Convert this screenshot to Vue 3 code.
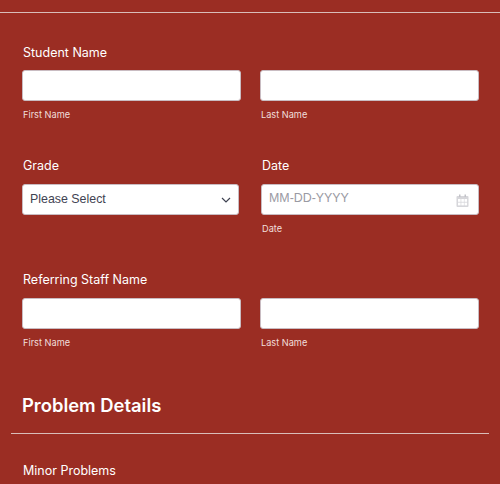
<script setup>
const rows = [
  { label: 'Student Name', subs: ['First Name', 'Last Name'] },
  { label: 'Referring Staff Name', subs: ['First Name', 'Last Name'] }
]
</script>

<template>
  <div class="page">
    <hr class="rule top-rule" />

    <section class="row-block first">
      <div class="label">{{ rows[0].label }}</div>
      <div class="pair">
        <div v-for="sub in rows[0].subs" :key="sub" class="field">
          <div class="input"></div>
          <div class="sub">{{ sub }}</div>
        </div>
      </div>
    </section>

    <section class="grade-date">
      <div class="col">
        <div class="label wide">Grade</div>
        <div class="input select">
          <span>Please Select</span>
          <svg class="chevron" width="10" height="6" viewBox="0 0 10 6">
            <path d="M1 1l4 4 4-4" fill="none" stroke="#3f4352" stroke-width="1.2" />
          </svg>
        </div>
      </div>
      <div class="col">
        <div class="label wide">Date</div>
        <div class="input date">
          <span>MM-DD-YYYY</span>
          <svg class="cal" width="13" height="13" viewBox="0 0 12 13">
            <rect x="0" y="2" width="12" height="11" rx="1" fill="#d6d6da" />
            <rect x="2.5" y="0.5" width="1.5" height="2.5" fill="#c2c2c8" />
            <rect x="8" y="0.5" width="1.5" height="2.5" fill="#c2c2c8" />
            <rect x="1.5" y="5" width="2.6" height="2.8" fill="#fff" />
            <rect x="4.8" y="5" width="2.6" height="2.8" fill="#fff" />
            <rect x="8" y="5" width="2.6" height="2.8" fill="#fff" />
            <rect x="1.5" y="8.6" width="2.6" height="2.8" fill="#fff" />
            <rect x="4.8" y="8.6" width="2.6" height="2.8" fill="#fff" />
            <rect x="8" y="8.6" width="2.6" height="2.8" fill="#fff" />
          </svg>
        </div>
        <div class="sub">Date</div>
      </div>
    </section>

    <section class="row-block staff">
      <div class="label wide">{{ rows[1].label }}</div>
      <div class="pair">
        <div v-for="sub in rows[1].subs" :key="sub" class="field">
          <div class="input"></div>
          <div class="sub">{{ sub }}</div>
        </div>
      </div>
    </section>

    <h2 class="heading">Problem Details</h2>
    <hr class="rule bottom-rule" />
    <div class="label minor">Minor Problems</div>
  </div>
</template>

<style>
html, body {
  margin: 0;
  background: #9b2d23;
}
</style>

<style scoped>
.page {
  width: 500px;
  height: 484px;
  overflow: hidden;
  box-sizing: border-box;
  padding-top: 12px;
  background: #9b2d23;
  font-family: Inter, "Liberation Sans", sans-serif;
  color: #fff;
}

.rule {
  margin: 0;
  border: 0;
  height: 1px;
  background: #d9bdb9;
}

.row-block.first {
  margin-top: 31px;
}

.row-block,
.grade-date {
  padding: 0 21px 0 22px;
}

.label {
  font-size: 12.5px;
  line-height: 16px;
  font-weight: 400;
  padding: 1px 0 0 1px;
  margin-bottom: 9px;
}

.label.wide {
  margin-bottom: 10px;
}

.pair {
  display: grid;
  grid-template-columns: 219px 219px;
  column-gap: 19px;
}

.input {
  box-sizing: border-box;
  height: 31px;
  background: #fff;
  border: 1px solid #c9bcc2;
  border-radius: 3px;
}

.sub {
  font-size: 9.2px;
  line-height: 12px;
  padding-left: 1px;
  margin-top: 8px;
  color: #f1dfdc;
}

.grade-date {
  display: grid;
  grid-template-columns: 217px 218px;
  column-gap: 22px;
  margin-top: 36px;
}

.select,
.date {
  display: flex;
  align-items: center;
  justify-content: space-between;
  font-family: "Liberation Sans", sans-serif;
  font-size: 12.4px;
}

.select {
  padding: 0 7px 2px 7px;
  color: #3f4352;
}

.date {
  padding: 0 9px 4px 7px;
  color: #9a9aa3;
}

.cal {
  margin-top: 5px;
}

.chevron {
  margin-top: 2px;
}

.staff {
  margin-top: 36px;
}

.heading {
  margin: 44px 0 0 22px;
  font-size: 18.4px;
  line-height: 24px;
  font-weight: 600;
}

.bottom-rule {
  margin: 16px 11px 0;
}

.minor {
  margin: 28px 0 0 22px;
}
</style>
